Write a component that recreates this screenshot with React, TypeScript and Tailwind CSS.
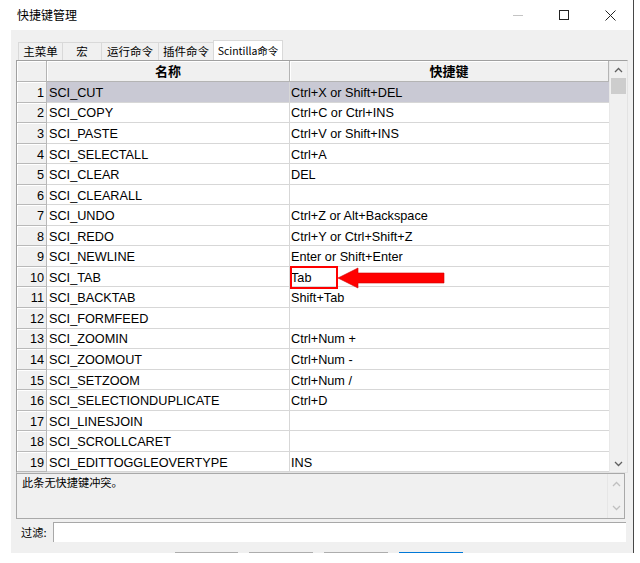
import React from "react";

const rows: [string, string][] = [
  ["SCI_CUT", "Ctrl+X or Shift+DEL"],
  ["SCI_COPY", "Ctrl+C or Ctrl+INS"],
  ["SCI_PASTE", "Ctrl+V or Shift+INS"],
  ["SCI_SELECTALL", "Ctrl+A"],
  ["SCI_CLEAR", "DEL"],
  ["SCI_CLEARALL", ""],
  ["SCI_UNDO", "Ctrl+Z or Alt+Backspace"],
  ["SCI_REDO", "Ctrl+Y or Ctrl+Shift+Z"],
  ["SCI_NEWLINE", "Enter or Shift+Enter"],
  ["SCI_TAB", "Tab"],
  ["SCI_BACKTAB", "Shift+Tab"],
  ["SCI_FORMFEED", ""],
  ["SCI_ZOOMIN", "Ctrl+Num +"],
  ["SCI_ZOOMOUT", "Ctrl+Num -"],
  ["SCI_SETZOOM", "Ctrl+Num /"],
  ["SCI_SELECTIONDUPLICATE", "Ctrl+D"],
  ["SCI_LINESJOIN", ""],
  ["SCI_SCROLLCARET", ""],
  ["SCI_EDITTOGGLEOVERTYPE", "INS"],
];

const tabs = [
  { label: "主菜单", w: "w-[44px]" },
  { label: "宏", w: "w-[39px]" },
  { label: "运行命令", w: "w-[57px]" },
  { label: "插件命令", w: "w-[55px]" },
];

const Chevron = ({ up, color = "#606060" }: { up?: boolean; color?: string }) => (
  <svg width="9" height="6" viewBox="0 0 9 6">
    <polyline
      points={up ? "1,5 4.5,1.5 8,5" : "1,1 4.5,4.5 8,1"}
      fill="none"
      stroke={color}
      strokeWidth="1.3"
    />
  </svg>
);

export default function App() {
  return (
    <div className="relative w-[640px] h-[563px] bg-white overflow-hidden font-['Liberation_Sans','Noto_Sans_CJK_SC',sans-serif] text-black">
      <div className="w-[634px] h-[553px] border-r border-[#474747] flex flex-col">
        {/* title bar */}
        <div className="h-[30px] flex items-center bg-white shrink-0">
          <span className="pl-[17px] text-[12px] font-['Noto_Sans_CJK_SC',sans-serif]">快捷键管理</span>
          <div className="ml-auto flex h-full">
            <div className="w-[46px] flex items-center justify-center">
              <div className="w-[10px] h-px bg-[#c4c4c4]" />
            </div>
            <div className="w-[46px] flex items-center justify-center">
              <div className="w-[10px] h-[10px] border border-[#222]" />
            </div>
            <div className="w-[46px] flex items-center justify-center">
              <svg width="11" height="11" viewBox="0 0 11 11">
                <path d="M0.5 0.5 L10.5 10.5 M10.5 0.5 L0.5 10.5" stroke="#222" strokeWidth="1" />
              </svg>
            </div>
          </div>
        </div>

        {/* body */}
        <div className="flex flex-1 min-h-0">
          <div className="w-[11px] bg-white" />
          <div className="flex-1 bg-[#f0f0f0] flex flex-col overflow-hidden">
            {/* tabs */}
            <div className="mt-[10px] h-[20px] pl-[7px] flex items-end shrink-0">
              {tabs.map((t) => (
                <div
                  key={t.label}
                  className={`${t.w} h-[18px] border-t border-l border-[#d9d9d9] flex items-center justify-center text-[11.5px] font-['Noto_Sans_CJK_SC',sans-serif]`}
                >
                  {t.label}
                </div>
              ))}
              <div className="w-[70px] h-[20px] bg-white border-t border-l border-r border-[#d9d9d9] flex items-center justify-center text-[10.5px] font-['Noto_Sans_CJK_SC',sans-serif]">
                Scintilla命令
              </div>
            </div>

            {/* grid */}
            <div className="ml-[5px] w-[612px] flex shrink-0 border-t border-l border-[#a0a0a0] border-r border-r-[#e3e3e3] border-b border-b-[#e3e3e3]">
              <div className="w-[592px] flex flex-col">
                <div className="flex h-[21px] shrink-0">
                  <div className="w-[30px] bg-[#f0f0f0] border-r border-b border-[#b4b4b4] shadow-[inset_1px_1px_0_#fff]" />
                  <div className="w-[243px] bg-[#f0f0f0] border-r border-b border-[#b4b4b4] shadow-[inset_1px_1px_0_#fff] flex items-center justify-center text-[13px] font-bold font-['Noto_Sans_CJK_SC',sans-serif]">
                    名称
                  </div>
                  <div className="w-[319px] bg-[#f0f0f0] border-r border-b border-[#b4b4b4] shadow-[inset_1px_1px_0_#fff] flex items-center justify-center text-[13px] font-bold font-['Noto_Sans_CJK_SC',sans-serif]">
                    快捷键
                  </div>
                </div>
                {rows.map(([name, key], i) => {
                  const sel = i === 0;
                  return (
                    <div key={name} className="flex h-[20.55px] shrink-0 text-[12.7px] leading-none">
                      <div className="w-[30px] bg-[#f0f0f0] border-r border-b border-[#b9b9b9] shadow-[inset_1px_1px_0_#fff] flex items-center justify-end pr-[2px] pt-[3px]">
                        {i + 1}
                      </div>
                      <div
                        className={`w-[243px] border-r border-b border-[#d7d7d7] flex items-center pl-[2px] pt-[3px] ${
                          sel ? "bg-[#c9c9d4]" : "bg-white"
                        }`}
                      >
                        {name}
                      </div>
                      <div
                        className={`w-[319px] border-b border-[#d7d7d7] flex items-center pl-[1px] pt-[3px] ${
                          sel ? "bg-[#c9c9d4]" : "bg-white"
                        }`}
                      >
                        {key}
                      </div>
                    </div>
                  );
                })}
              </div>
              {/* scrollbar */}
              <div className="w-[18px] bg-[#f0f0f0] flex flex-col border-l border-[#e8e8e8]">
                <div className="h-[17px] flex items-center justify-center pt-[1px]">
                  <Chevron up />
                </div>
                <div className="h-[16px] mx-[1px] bg-[#cdcdcd]" />
                <div className="flex-1" />
                <div className="h-[17px] flex items-center justify-center">
                  <Chevron />
                </div>
              </div>
            </div>

            {/* status box */}
            <div className="ml-[5px] w-[609px] h-[46px] shrink-0 border border-[#a9a9a9] flex">
              <div className="flex-1 pl-[5px] pt-[1px] text-[11.2px] leading-[14px] font-['Noto_Sans_CJK_SC',sans-serif]">
                此条无快捷键冲突。
              </div>
              <div className="w-[17px] flex flex-col justify-between items-center py-[7px] border-l border-[#e6e6e6]">
                <Chevron up color="#c0c0c0" />
                <Chevron color="#c0c0c0" />
              </div>
            </div>

            {/* filter */}
            <div className="mt-[3px] h-[20px] flex items-center shrink-0">
              <span className="pl-[10px] w-[42px] text-[11.2px] font-['Noto_Sans_CJK_SC',sans-serif]">过滤:</span>
              <div className="w-[573px] h-[20px] bg-white border-t border-l border-[#a8a8a8]" />
            </div>

            {/* buttons (clipped) */}
            <div className="mt-[10px] flex pl-[164px] gap-[11px] shrink-0">
              <div className="w-[63px] h-[23px] bg-[#e1e1e1] border border-[#adadad]" />
              <div className="w-[64px] h-[23px] bg-[#e1e1e1] border border-[#adadad]" />
              <div className="w-[64px] h-[23px] bg-[#e1e1e1] border border-[#adadad]" />
              <div className="w-[64px] h-[23px] bg-[#e1e1e1] border border-[#0078d7]" />
            </div>
          </div>
        </div>
      </div>

      {/* annotation: red box + arrow */}
      <div className="absolute left-[290px] top-[266px] w-[48px] h-[23px] border-2 border-[#ff0000]" />
      <svg className="absolute left-[337px] top-[265px]" width="108" height="26" viewBox="0 0 108 26">
        <polygon
          points="1,13 21,3 21,8 107,8 107,18 21,18 21,23"
          fill="#ff0000"
          stroke="#d00000"
          strokeWidth="0.6"
        />
      </svg>
    </div>
  );
}
